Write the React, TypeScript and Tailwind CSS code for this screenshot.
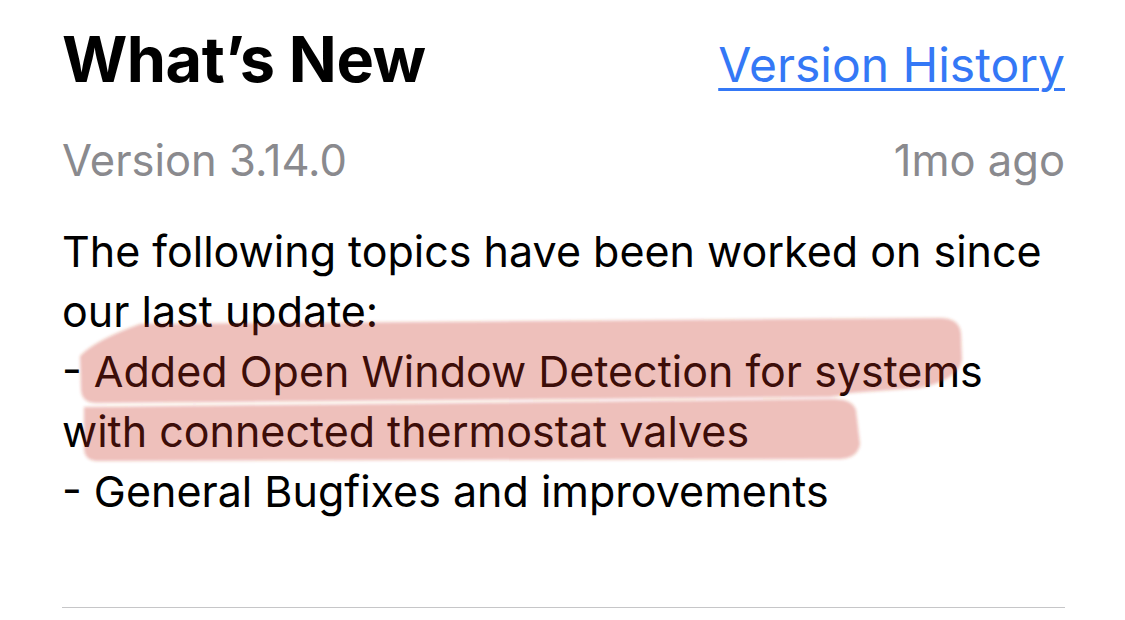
import React from 'react';

// highlighter strokes drawn over the release notes
function Highlighter() {
  return (
    <svg className="absolute inset-0 pointer-events-none" width={1125} height={620} viewBox="0 0 1125 620">
      <defs>
        <filter id="soft" x="-5%" y="-20%" width="110%" height="140%">
          <feGaussianBlur stdDeviation="1.6" />
        </filter>
      </defs>
      <g fill="rgb(200,50,33)" fillOpacity={0.3} filter="url(#soft)">
        <path d="M80 356 Q 95 340 140 324 L 940 318 Q 960 318 961 334 L 962 360 Q 958 380 920 388 L 850 393 Q 840 396 830 397 L 96 403 Q 82 403 81 390 Z" />
        <path d="M84 407 L 830 399 Q 852 398 856 410 L 860 444 Q 858 458 840 459 L 96 461 Q 84 460 84 448 Z" />
      </g>
    </svg>
  );
}

export default function App() {
  return (
    <main className="relative w-[1125px] h-[620px] bg-white overflow-hidden font-['Inter',sans-serif]">
      <div className="pl-[62px] pr-[60px] pt-[19px]">
        <div className="flex items-baseline justify-between">
          <h1 className="text-[63px] leading-[80px] font-bold tracking-[-0.5px] text-black">What’s New</h1>
          <a className="text-[48px] leading-[80px] text-[#3478f6] underline decoration-[3px] underline-offset-[6px]">Version History</a>
        </div>
        <div className="flex items-baseline justify-between mt-[25px] text-[43.5px] leading-[60px] text-[#8a8a8e]">
          <span>Version 3.14.0</span>
          <span>1mo ago</span>
        </div>
        <div className="mt-[31px] text-[43px] leading-[60px] text-black">
          <p>The following topics have been worked on since</p>
          <p>our last update:</p>
          <p>- Added Open Window Detection for systems</p>
          <p>with connected thermostat valves</p>
          <p>- General Bugfixes and improvements</p>
        </div>
        <div className="mt-[86px] h-px bg-[#c6c6c8]" />
      </div>
      <Highlighter />
    </main>
  );
}
